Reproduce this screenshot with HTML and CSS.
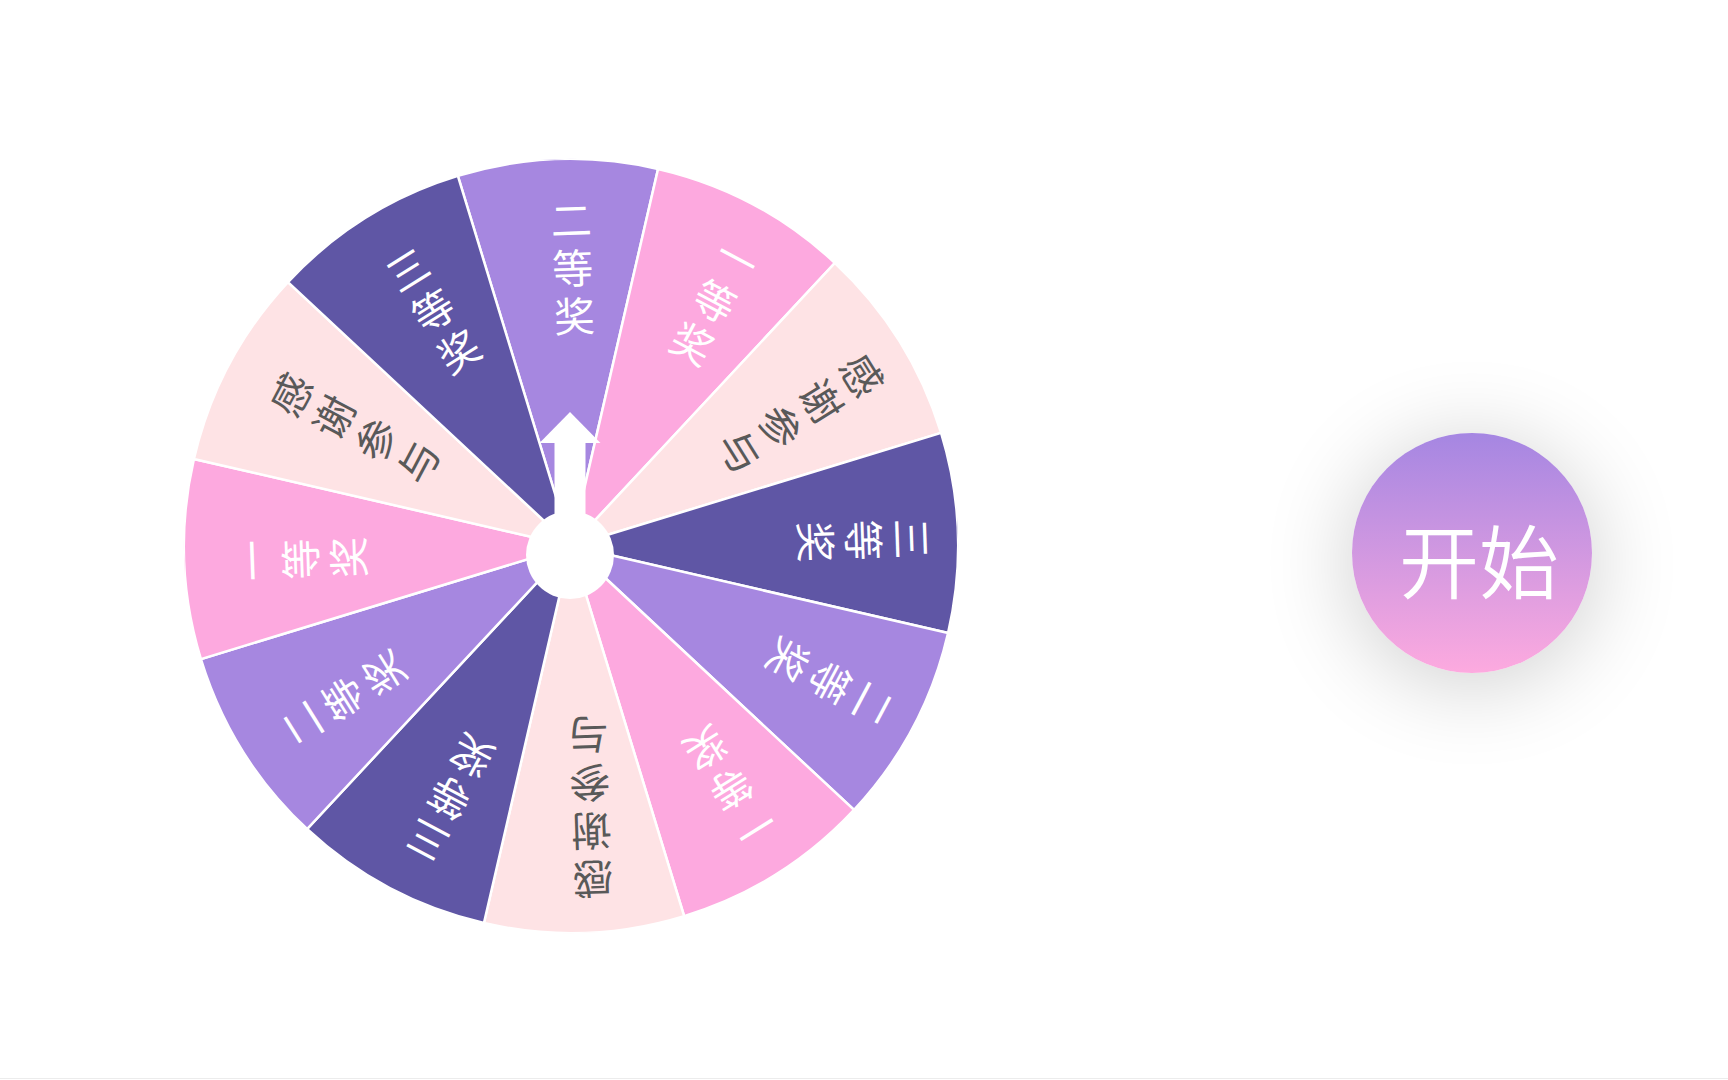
FILE: index.html
```html
<!DOCTYPE html>
<html lang="zh-CN">
<head>
    <meta charset="UTF-8">
    <meta name="viewport" content="width=device-width, initial-scale=1.0">
    <title>幸运大转盘</title>
    <link rel="stylesheet" href="styles.css">
</head>
<body>
    <div class="stage">
        <div class="wheel-box">
            <div class="wheel">
                <svg class="plate" viewBox="-387 -387 774 774">
                    <defs>
                        <path id="wedge" d="M0 0 L-100.16 -373.81 A387 387 0 0 1 100.16 -373.81 Z" />
                    </defs>
                    <use href="#wedge" class="lilac" />
                    <use href="#wedge" class="pink" transform="rotate(30)" />
                    <use href="#wedge" class="blush" transform="rotate(60)" />
                    <use href="#wedge" class="dark" transform="rotate(90)" />
                    <use href="#wedge" class="lilac" transform="rotate(120)" />
                    <use href="#wedge" class="pink" transform="rotate(150)" />
                    <use href="#wedge" class="blush" transform="rotate(180)" />
                    <use href="#wedge" class="dark" transform="rotate(210)" />
                    <use href="#wedge" class="lilac" transform="rotate(240)" />
                    <use href="#wedge" class="pink" transform="rotate(270)" />
                    <use href="#wedge" class="blush" transform="rotate(300)" />
                    <use href="#wedge" class="dark" transform="rotate(330)" />
                </svg>
                <div class="slot"><span class="label">二等奖</span></div>
                <div class="slot"><span class="label">一等奖</span></div>
                <div class="slot"><span class="label thanks">感谢参与</span></div>
                <div class="slot"><span class="label">三等奖</span></div>
                <div class="slot"><span class="label">二等奖</span></div>
                <div class="slot"><span class="label">一等奖</span></div>
                <div class="slot"><span class="label thanks">感谢参与</span></div>
                <div class="slot"><span class="label">三等奖</span></div>
                <div class="slot"><span class="label">二等奖</span></div>
                <div class="slot"><span class="label">一等奖</span></div>
                <div class="slot"><span class="label thanks">感谢参与</span></div>
                <div class="slot"><span class="label">三等奖</span></div>
            </div>
            <!-- fixed pointer, does not turn with the wheel -->
            <svg class="pointer" viewBox="0 0 88 187">
                <circle cx="44" cy="143" r="44" />
                <rect x="28.5" y="30" width="31" height="114" />
                <polygon points="44,0 13.5,31 74.5,31" />
            </svg>
        </div>
        <button class="start" type="button">开始</button>
    </div>
</body>
</html>
```

FILE: styles.css
```css
body {
    margin: 0;
    background-color: #fff;
    font-family: "Noto Sans CJK SC", "Noto Sans", sans-serif;
}

.stage {
    display: flex;
    align-items: flex-start;
    gap: 394px;
    height: 1079px;
    padding: 159px 0 0 184px;
    box-sizing: border-box;
    border-bottom: 1px solid #ececec;
}

.wheel-box {
    position: relative;
    width: 774px;
    height: 774px;
    flex-shrink: 0;
}

.wheel {
    position: relative;
    width: 100%;
    height: 100%;
    transform: rotate(-2deg);
}

    .wheel .plate {
        display: block;
        width: 100%;
        height: 100%;
    }

.plate use {
    stroke: #fff;
    stroke-width: 2.5;
}

.plate .dark {
    fill: #5f56a5;
}

.plate .lilac {
    fill: #a687e0;
}

.plate .pink {
    fill: #fda9df;
}

.plate .blush {
    fill: #fee3e5;
}

/* prize names turn around a point a little off the hub */
.slot {
    position: absolute;
    left: calc(50% + 11px);
    top: 4px;
    width: 60px;
    height: 50%;
    margin-left: -30px;
    display: flex;
    justify-content: center;
    transform-origin: 50% 100%;
}

    .slot:nth-of-type(2) { transform: rotate(30deg); }
    .slot:nth-of-type(3) { transform: rotate(60deg); }
    .slot:nth-of-type(4) { transform: rotate(90deg); }
    .slot:nth-of-type(5) { transform: rotate(120deg); }
    .slot:nth-of-type(6) { transform: rotate(150deg); }
    .slot:nth-of-type(7) { transform: rotate(180deg); }
    .slot:nth-of-type(8) { transform: rotate(210deg); }
    .slot:nth-of-type(9) { transform: rotate(240deg); }
    .slot:nth-of-type(10) { transform: rotate(270deg); }
    .slot:nth-of-type(11) { transform: rotate(300deg); }
    .slot:nth-of-type(12) { transform: rotate(330deg); }

.label {
    writing-mode: vertical-rl;
    text-orientation: upright;
    padding-top: 37px;
    font-size: 41px;
    letter-spacing: 7px;
    line-height: 1;
    color: #fff;
}

    .label.thanks {
        color: #595959;
    }

.pointer {
    position: absolute;
    left: 342px;
    top: 253px;
    width: 88px;
    height: 187px;
    fill: #fff;
}

.start {
    width: 240px;
    height: 240px;
    margin-top: 274px;
    padding: 8px 0 0 14px;
    flex-shrink: 0;
    border: none;
    border-radius: 50%;
    background: linear-gradient(#a586e2, #fdaadf);
    color: #fff;
    font-family: "Noto Sans CJK SC", sans-serif;
    font-size: 80px;
    font-weight: 350;
    box-shadow: 0 10px 90px rgba(0, 0, 0, 0.2);
    cursor: pointer;
}
```
